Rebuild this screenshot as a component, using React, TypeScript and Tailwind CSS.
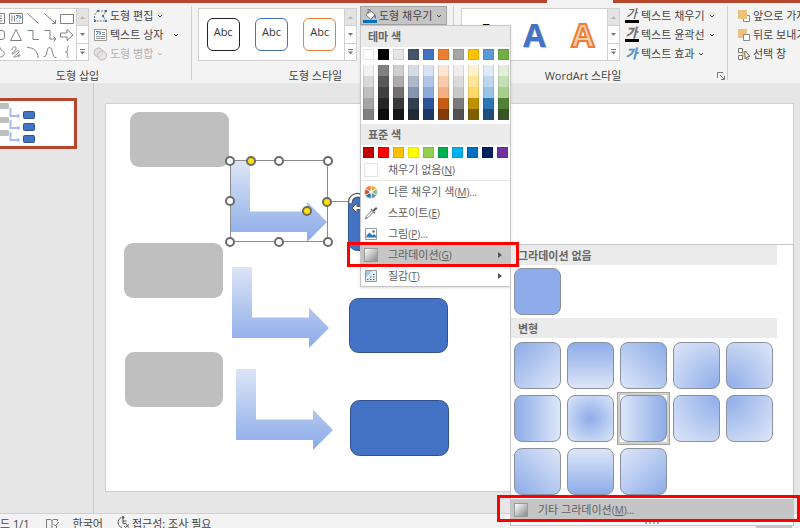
import type { ReactNode } from "react";
import clsx from "clsx";

const themeColors = [
  { base: "#ffffff", shades: ["#f2f2f2", "#d9d9d9", "#bfbfbf", "#a6a6a6", "#808080"] },
  { base: "#000000", shades: ["#808080", "#595959", "#404040", "#262626", "#0d0d0d"] },
  { base: "#e7e6e6", shades: ["#d0cece", "#aeabab", "#757070", "#3a3838", "#171616"] },
  { base: "#44546a", shades: ["#d6dce4", "#adb9ca", "#8496b0", "#323f4f", "#222a35"] },
  { base: "#4472c4", shades: ["#d9e2f3", "#b4c6e7", "#8eaadb", "#2f5496", "#1f3864"] },
  { base: "#ed7d31", shades: ["#fbe5d5", "#f7cbac", "#f4b183", "#c55a11", "#833c0b"] },
  { base: "#a5a5a5", shades: ["#ededed", "#dbdbdb", "#c9c9c9", "#7b7b7b", "#525252"] },
  { base: "#ffc000", shades: ["#fff2cc", "#fee599", "#ffd965", "#bf9000", "#7f6000"] },
  { base: "#5b9bd5", shades: ["#deebf6", "#bdd7ee", "#9cc3e5", "#2e75b5", "#1e4e79"] },
  { base: "#70ad47", shades: ["#e2efd9", "#c5e0b3", "#a8d08d", "#538135", "#375623"] },
];

const standardColors = [
  "#c00000",
  "#ff0000",
  "#ffc000",
  "#ffff00",
  "#92d050",
  "#00b050",
  "#00b0f0",
  "#0070c0",
  "#002060",
  "#7030a0",
];

const variations = [
  { name: "왼쪽 위에서", fill: "bg-[linear-gradient(135deg,#8dace9,#dde6f7)]" },
  { name: "위에서", fill: "bg-[linear-gradient(180deg,#8dace9,#dde6f7)]" },
  { name: "오른쪽 위에서", fill: "bg-[linear-gradient(225deg,#8dace9,#dde6f7)]" },
  { name: "오른쪽 아래 모서리", fill: "bg-[radial-gradient(circle_at_100%_100%,#8dace9,#dde6f7)]" },
  { name: "왼쪽 아래 모서리", fill: "bg-[radial-gradient(circle_at_0%_100%,#8dace9,#dde6f7)]" },
  { name: "왼쪽에서", fill: "bg-[linear-gradient(90deg,#8dace9,#dde6f7)]" },
  { name: "가운데에서", fill: "bg-[radial-gradient(circle,#8dace9,#dde6f7)]" },
  { name: "오른쪽에서", fill: "bg-[linear-gradient(270deg,#8dace9,#dde6f7)]", selected: true },
  { name: "오른쪽 위 모서리", fill: "bg-[radial-gradient(circle_at_100%_0%,#8dace9,#dde6f7)]" },
  { name: "왼쪽 위 모서리", fill: "bg-[radial-gradient(circle_at_0%_0%,#8dace9,#dde6f7)]" },
  { name: "왼쪽 아래에서", fill: "bg-[linear-gradient(45deg,#8dace9,#dde6f7)]" },
  { name: "아래에서", fill: "bg-[linear-gradient(0deg,#8dace9,#dde6f7)]" },
  { name: "오른쪽 아래에서", fill: "bg-[linear-gradient(315deg,#8dace9,#dde6f7)]" },
];

const shapes: { name: string; art: ReactNode }[] = [
  { name: "텍스트 상자", art: <path d="M2.5 3.5h11v10h-11zM5 6h6M5 8.500h6M5 11h6" /> },
  {
    name: "세로 텍스트",
    art: (
      <>
        <path d="M1.500 3.500h13v10h-13zM4 5.500v6M6.500 5.500v6M9 10.500v1M11.500 10.500v1" />
        <path d="M8 5.500h2.500l-2 3.500M12 5v4M12 7h1.500" stroke="#2e75b5" />
      </>
    ),
  },
  { name: "선", art: <path d="M2.500 3.500l11 10" /> },
  { name: "화살표", art: <path d="M2.500 3.500l11 10M13.500 10v3.500h-3.500" /> },
  { name: "직사각형", art: <path d="M1.500 4.500h13v9h-13z" /> },
  { name: "둥근 직사각형", art: <rect x="2.500" y="3.500" width="11" height="9" rx="2.500" /> },
  { name: "삼각형", art: <path d="M8 2.500l5.500 11h-11z" /> },
  { name: "꺾인 연결선", art: <path d="M2.500 3.500h5.500v9h6" /> },
  { name: "꺾인 화살표", art: <path d="M2.500 3.500h5.500v8.500h6M11.500 9.500l2.500 2.500-2.500 2.500" /> },
  { name: "오른쪽 화살표", art: <path d="M1.500 6h6.500v-3.500l6 5.500-6 5.500v-3.500h-6.500z" /> },
  { name: "자유형", art: <path d="M6 3.500c5-2 3 3 5 3s4 4 0 6-6 0-8-1" /> },
  {
    name: "자유 곡선",
    art: <path d="M4 6c0-4 5-4 4-1s-5 4-4 5 6-5 7-3-6 5-5 6 6-3 6-2-1 2-2 2" />,
  },
  { name: "호", art: <path d="M2 3.500c7 0 11 4 11 10.500" /> },
  { name: "곡선", art: <path d="M1.500 12.500c5 1 2-9 6-9s2 11 7 10" /> },
  { name: "왼쪽 중괄호", art: <path d="M10 2.500c-2.500 0-1.500 2-1.500 3.500s-.5 2-2 2c1.500 0 2 .5 2 2s-1 3.500 1.500 3.500" /> },
];

function Chevron() {
  return (
    <svg viewBox="0 0 6 4" className="h-1 w-1.5 shrink-0" fill="none" stroke="currentColor">
      <path d="M1 1l2 2 2-2" />
    </svg>
  );
}

function Divider() {
  return <div className="my-[3px] w-px shrink-0 bg-[#cfcfcf]" />;
}

function GalleryScroller() {
  return (
    <div className="flex w-3 shrink-0 flex-col divide-y divide-[#d0d0d0] border-l border-[#d0d0d0] text-[#777]">
      <button aria-label="위로" className="flex flex-1 items-center justify-center bg-[#e3e3e3] text-[#b8b8b8]">
        <svg viewBox="0 0 5 3" className="h-[3px] w-[5px]" fill="currentColor">
          <path d="M0 3l2.500-3L5 3z" />
        </svg>
      </button>
      <button aria-label="아래로" className="flex flex-1 items-center justify-center">
        <svg viewBox="0 0 5 3" className="h-[3px] w-[5px]" fill="currentColor">
          <path d="M0 0l2.500 3L5 0z" />
        </svg>
      </button>
      <button aria-label="자세히" className="flex flex-1 items-center justify-center">
        <svg viewBox="0 0 5 6" className="h-1.5 w-[5px]" fill="currentColor">
          <path d="M0 0h5v1H0zM0 2.500l2.500 3L5 2.500z" />
        </svg>
      </button>
    </div>
  );
}

function RibbonButton({
  icon,
  label,
  wide,
  plain,
  disabled,
}: {
  icon: ReactNode;
  label: string;
  wide?: boolean;
  plain?: boolean;
  disabled?: boolean;
}) {
  return (
    <button
      disabled={disabled}
      className={clsx(
        "flex h-[19px] items-center whitespace-nowrap",
        wide ? "gap-2.5" : "gap-1",
        disabled && "text-[#b1b1b1]"
      )}
    >
      <span className="flex items-center gap-0.5">
        {icon}
        <span className="pt-0.5">{label}</span>
      </span>
      {!plain && <Chevron />}
    </button>
  );
}

function Group({
  title,
  launcher,
  className,
  children,
}: {
  title?: string;
  launcher?: boolean;
  className: string;
  children: ReactNode;
}) {
  return (
    <section className={clsx("flex flex-col pt-[3px]", className)}>
      <div className="flex h-[63px]">{children}</div>
      {title && (
        <div className="flex h-3.5 items-center leading-[14px]">
          <h2 className="flex-1 text-center">{title}</h2>
          {launcher && (
            <button aria-label="서식 창 열기" className="mr-0.5">
              <svg viewBox="0 0 8 8" className="h-2 w-2" fill="none" stroke="#777">
                <path d="M.5 6V.5H6M3 3l4 4M7.500 4v3.500H4" />
              </svg>
            </button>
          )}
        </div>
      )}
    </section>
  );
}

function TextIcon({ kind }: { kind: "fill" | "outline" | "effect" }) {
  return (
    <span aria-hidden className="flex h-4 w-[15px] shrink-0 flex-col items-center justify-center gap-px">
      <span
        className={clsx(
          "text-[12px] leading-[11px] italic",
          kind === "outline" && "text-white [-webkit-text-stroke:1px_#777]",
          kind === "effect" && "text-[#a9cbea] [-webkit-text-stroke:1px_#5a93c8]"
        )}
      >
        가
      </span>
      {kind !== "effect" && <span className="h-[3px] w-3.5 bg-black" />}
    </span>
  );
}

function Swatch({ color }: { color: string }) {
  return (
    <button
      aria-label={color}
      className="h-[11px] w-[11px] border border-black/10"
      style={{ backgroundColor: color }}
    />
  );
}

function MenuHeading({ children, className }: { children: ReactNode; className?: string }) {
  return (
    <h3 className={clsx("flex items-center bg-[#ebebeb] pt-0.5 pl-[7px] font-bold text-[#666]", className)}>
      {children}
    </h3>
  );
}

function MenuItem({
  icon,
  label,
  hotkey,
  more,
  arrow,
  active,
}: {
  icon: ReactNode;
  label: string;
  hotkey: string;
  more?: boolean;
  arrow?: boolean;
  active?: boolean;
}) {
  return (
    <button
      className={clsx(
        "flex h-[21px] w-full items-center gap-2.5 pl-[3px] text-left whitespace-nowrap",
        active && "bg-[#c5c5c5]"
      )}
    >
      <span className="flex h-3.5 w-3.5 shrink-0">{icon}</span>
      <span className="flex-1 pt-0.5">
        {label}
        <span className="text-[10px]">
          (<u>{hotkey}</u>){more && "..."}
        </span>
      </span>
      {arrow && (
        <svg viewBox="0 0 4 6" className="mr-2 h-1.5 w-1" fill="#555">
          <path d="M0 0l4 3-4 3z" />
        </svg>
      )}
    </button>
  );
}

function GradientIcon() {
  return <span className="h-full w-full border border-[#999] bg-linear-to-br from-white to-[#8a8a8a]" />;
}

function GradientThumb({ name, fill, selected }: { name: string; fill: string; selected?: boolean }) {
  return (
    <button
      aria-label={name}
      className={clsx(
        "h-[47px] w-[47px]",
        selected && "ring-2 ring-[#d2d0cc] outline outline-offset-2 outline-[#a5a39f]"
      )}
    >
      <span className={clsx("block h-full w-full rounded-lg border border-[#8a909e]", fill)} />
    </button>
  );
}

function GradientMenu() {
  return (
    <div className="absolute top-0 left-full z-10 w-[284px] border border-[#c6c6c6] bg-white">
      <MenuHeading className="mr-4 h-5">그라데이션 없음</MenuHeading>
      <div className="flex p-[3px]">
        <GradientThumb name="그라데이션 없음" fill="bg-[#8dace9]" />
      </div>
      <MenuHeading className="mr-4 h-5">변형</MenuHeading>
      <div className="flex flex-wrap gap-1.5 py-1 pr-3 pl-[3px]">
        {variations.map((v) => (
          <GradientThumb key={v.name} {...v} />
        ))}
      </div>
      <div className="relative">
        <MenuItem icon={<GradientIcon />} label="기타 그라데이션" hotkey="M" more active />
        <div className="pointer-events-none absolute -top-1 -right-[7px] -bottom-0.5 -left-3.5 border-3 border-[#ff0000]" />
      </div>
      <div className="flex h-[5px] items-center justify-center gap-0.5">
        {[0, 1, 2, 3].map((dot) => (
          <span key={dot} className="h-0.5 w-0.5 bg-[#aaa]" />
        ))}
      </div>
    </div>
  );
}

function FillMenu() {
  return (
    <div className="absolute top-full left-0 w-[151px] border border-[#c6c6c6] bg-white text-[#606060] shadow-sm">
      <MenuHeading className="h-[21px]">테마 색</MenuHeading>
      <div className="flex gap-1 px-0.5 pt-0.5 pb-1">
        {themeColors.map((c) => (
          <div key={c.base} className="flex flex-col gap-[5px]">
            <Swatch color={c.base} />
            <div className="flex flex-col">
              {c.shades.map((shade) => (
                <button
                  key={shade}
                  aria-label={shade}
                  className="h-[11px] w-[11px] border-x border-black/10"
                  style={{ backgroundColor: shade }}
                />
              ))}
            </div>
          </div>
        ))}
      </div>
      <MenuHeading className="h-[21px]">표준 색</MenuHeading>
      <div className="flex gap-1 px-0.5 pt-0.5 pb-px">
        {standardColors.map((c) => (
          <Swatch key={c} color={c} />
        ))}
      </div>
      <div className="border-b border-[#e3e3e3]">
        <MenuItem
          icon={<span className="h-full w-full border border-[#e3e3e3] bg-white" />}
          label="채우기 없음"
          hotkey="N"
        />
      </div>
      <MenuItem
        icon={
          <svg viewBox="0 0 14 14" className="h-3.5 w-3.5" stroke="#fff" strokeWidth=".6">
            <path d="M7 7V.5a6.500 6.500 0 0 1 5.600 3.300z" fill="#f0b429" />
            <path d="M7 7l5.600-3.200a6.500 6.500 0 0 1 0 6.500z" fill="#8fb8a0" />
            <path d="M7 7l5.600 3.300A6.500 6.500 0 0 1 7 13.500z" fill="#6a9b8c" />
            <path d="M7 7v6.500a6.500 6.500 0 0 1-5.600-3.300z" fill="#2e75b5" />
            <path d="M7 7l-5.600 3.200a6.500 6.500 0 0 1 0-6.500z" fill="#c9512e" />
            <path d="M7 7L1.400 3.700A6.500 6.500 0 0 1 7 .5z" fill="#e8824a" />
            <circle cx="7" cy="7" r="1.500" fill="#fff" />
          </svg>
        }
        label="다른 채우기 색"
        hotkey="M"
        more
      />
      <MenuItem
        icon={
          <svg viewBox="0 0 14 14" className="h-3.5 w-3.5" fill="none" stroke="#777">
            <path d="M8 4.500L2.500 10 1 13l3-1.500L9.500 6" fill="#fff" />
            <path d="M7 3l4 4M9 5l2.500-2.500" strokeWidth="1.500" />
            <path d="M9.500 4.500l2.500-3 1 1-3 2.500z" fill="#555" stroke="#555" />
          </svg>
        }
        label="스포이트"
        hotkey="E"
      />
      <MenuItem
        icon={
          <svg viewBox="0 0 14 14" className="h-3.5 w-3.5">
            <path d="M1.500 1.500h11v11h-11z" fill="#fff" stroke="#999" />
            <path d="M2.500 10.500V8.500l3-3 3 3 1.500-1.500 2 2v1.500z" fill="#2e75b5" />
            <circle cx="9.500" cy="4.500" r="1.200" fill="#2e75b5" />
          </svg>
        }
        label="그림"
        hotkey="P"
        more
      />
      <div className="relative">
        <MenuItem icon={<GradientIcon />} label="그라데이션" hotkey="G" arrow active />
        <GradientMenu />
        <div className="pointer-events-none absolute -top-0.5 -right-[9px] -bottom-0.5 -left-3.5 z-20 border-3 border-[#ff0000]" />
      </div>
      <MenuItem
        icon={
          <svg viewBox="0 0 14 14" className="h-3.5 w-3.5">
            <path d="M1.500 1.500h11v11h-11z" fill="#e4edf6" stroke="#999" />
            <path d="M2 2h6L2 8z" fill="#a9c6e4" />
            <path d="M3 10.500h1.500M6 10.500h1.500M9 10.500h1.500M6 8h1.500M9 8h1.500M9 5.500h1.500" stroke="#2e75b5" />
          </svg>
        }
        label="질감"
        hotkey="T"
        arrow
      />
    </div>
  );
}

function Ribbon() {
  return (
    <header className="relative z-10 flex h-20 shrink-0 bg-[#f3f3f3]">
      <Group title="도형 삽입" className="w-[191px] shrink-0 [&_h2]:pr-9">
        <div className="mt-0.5 flex h-[53px] w-[89px] border border-l-0 border-[#d0d0d0] bg-white">
          <div className="grid flex-1 grid-cols-[repeat(5,17px)] justify-end overflow-hidden">
            {shapes.map((s) => (
              <button key={s.name} aria-label={s.name} className="flex h-[17px] items-center">
                <svg viewBox="0 0 16 16" className="h-4 w-4" fill="none" stroke="#808080">
                  {s.art}
                </svg>
              </button>
            ))}
          </div>
          <GalleryScroller />
        </div>
        <div className="flex flex-col items-start pl-1">
          <RibbonButton
            icon={
              <svg viewBox="0 0 15 14" className="h-3.5 w-[15px]" fill="none" stroke="#777">
                <path d="M1.500 12V6l3-4M5 2h8l-3 5 3 5H2" strokeDasharray="2 1" />
                <path d="M4 1h2v2H4zM12 1h2v2h-2zM9 6h2v2H9zM12 11h2v2h-2zM1 11h2v2H1z" fill="#2e75b5" stroke="none" />
              </svg>
            }
            label="도형 편집"
          />
          <RibbonButton
            wide
            icon={
              <svg viewBox="0 0 15 14" className="h-3.5 w-[15px]" fill="none" stroke="#999">
                <path d="M1.500 1.500h12v11h-12z" fill="#fff" />
                <path d="M9 4.500h3M9 6.500h3M3 8.500h9M3 10.500h9" />
                <path d="M3 3.500h2.500L3.500 7M7 3v4M7 5h1" stroke="#2e75b5" />
              </svg>
            }
            label="텍스트 상자"
          />
          <RibbonButton
            disabled
            icon={
              <svg viewBox="0 0 15 14" className="h-3.5 w-[15px]" fill="#e6e0e6" stroke="#bbb">
                <circle cx="5.500" cy="5.500" r="4.500" />
                <circle cx="9" cy="8.500" r="4.500" fillOpacity=".7" />
              </svg>
            }
            label="도형 병합"
          />
        </div>
      </Group>
      <Divider />
      <Group title="도형 스타일" className="w-[261px] shrink-0 pl-1.5 [&_h2]:pr-5">
        <div className="mt-0.5 flex h-[53px] w-[159px] border border-[#d0d0d0] bg-white">
          <div className="flex flex-1 items-center justify-around">
            {["border-[#222]", "border-[#4472c4]", "border-[#ed7d31]"].map((border) => (
              <button
                key={border}
                className={clsx("h-[33px] w-[33px] rounded-md border bg-white pb-1 text-[#333]", border)}
              >
                Abc
              </button>
            ))}
          </div>
          <GalleryScroller />
        </div>
        <div className="relative ml-[3px] h-[19px]">
          <button className="flex h-[19px] w-[87px] items-center gap-1 border border-[#a3a3a3] bg-[#c5c5c5] pl-0.5 whitespace-nowrap">
            <svg viewBox="0 0 14 16" className="h-4 w-3.5 shrink-0" fill="none">
              <path d="M3 7l4-4.500 5 4-4 5z" fill="#fff" stroke="#777" />
              <path d="M5 6V1.500h2V5" stroke="#777" />
              <path d="M11.500 6c2 1.500 1.500 3 1 5-1-1-1.500-3-1-5z" fill="#2e75b5" />
              <path d="M0 12h14v3H0z" fill="#0070c0" />
            </svg>
            <span className="-ml-0.5 pt-0.5">도형 채우기</span>
            <Chevron />
          </button>
          <FillMenu />
        </div>
      </Group>
      <Divider />
      <Group title="WordArt 스타일" launcher className="w-[273px] shrink-0 pl-[7px] [&_h2]:pr-3">
        <div className="mt-0.5 flex h-[53px] w-[159px] border border-[#d0d0d0] bg-white text-[33px] leading-none font-bold">
          <div className="grid flex-1 grid-cols-3 items-center">
            <button className="text-black">A</button>
            <button className="text-[#4472c4] [text-shadow:1px_1px_1px_#bbb]">A</button>
            <button className="text-[#f8cbad] [-webkit-text-stroke:2px_#ed7d31]">A</button>
          </div>
          <GalleryScroller />
        </div>
        <div className="flex flex-col items-start pl-1">
          <RibbonButton icon={<TextIcon kind="fill" />} label="텍스트 채우기" />
          <RibbonButton icon={<TextIcon kind="outline" />} label="텍스트 윤곽선" />
          <RibbonButton icon={<TextIcon kind="effect" />} label="텍스트 효과" />
        </div>
      </Group>
      <Divider />
      <Group className="min-w-0 flex-1 overflow-hidden pl-[9px]">
        <div className="flex flex-col items-start">
          <RibbonButton
            plain
            icon={
              <svg viewBox="0 0 14 14" className="h-3.5 w-3.5 shrink-0">
                <path d="M6.500 6.500h6v6h-6z" fill="#fff" stroke="#888" />
                <path d="M1 1h9v9H1z" fill="#ecc27e" />
              </svg>
            }
            label="앞으로 가져오기"
          />
          <RibbonButton
            plain
            icon={
              <svg viewBox="0 0 14 14" className="h-3.5 w-3.5 shrink-0">
                <path d="M1 1h9v9H1z" fill="#ecc27e" />
                <path d="M6.500 6.500h6v6h-6z" fill="#fff" stroke="#888" />
              </svg>
            }
            label="뒤로 보내기"
          />
          <RibbonButton
            plain
            icon={
              <svg viewBox="0 0 14 14" className="h-3.5 w-3.5 shrink-0" fill="#fff" stroke="#777">
                <path d="M5 4h5v6H5z" fill="#ecc27e" stroke="none" />
                <path d="M1.500 1.500h4v4h-4zM1.500 8.500h4v4h-4z" />
                <path d="M8 4l5 5.500-2.500.2 1 2.500-1.300.6-1-2.500L8 12z" />
              </svg>
            }
            label="선택 창"
          />
        </div>
      </Group>
    </header>
  );
}

function SlideThumbnail() {
  return (
    <button aria-label="슬라이드 1" className="mt-[15px] block w-[77px] border-[3px] border-l-0 border-[#b7472a] bg-white">
      <svg viewBox="0 0 74 45" className="block w-full">
        <g fill="#bfbfbf">
          <rect x="-3" y="2" width="12" height="6" rx="1" />
          <rect x="-3" y="16" width="12" height="6" rx="1" />
          <rect x="-3" y="29" width="12" height="6" rx="1" />
        </g>
        <g fill="#a3bdf0">
          <path d="M9.500 7h2v7h6v-1.500l3 2.500-3 2.500V16h-8z" />
          <path d="M9.500 19h2v7h6v-1.500l3 2.500-3 2.500V28h-8z" />
          <path d="M9.500 31h2v7h6v-1.500l3 2.500-3 2.500V40h-8z" />
        </g>
        <g fill="#4472c4" stroke="#2f528f">
          <rect x="23.500" y="10.500" width="11" height="7" rx="1" />
          <rect x="23.500" y="22.500" width="11" height="7" rx="1" />
          <rect x="23.500" y="34.500" width="11" height="7" rx="1" />
        </g>
      </svg>
    </button>
  );
}

// bent arrow, origin at the top left of its box
const arrowPath = "M0 0h20v50.500h57v-10l20 20.500-20 20v-10H0z";

function Slide() {
  return (
    <svg viewBox="106 104 687 387" className="block w-full bg-white outline outline-[#d0d0d0]">
      <defs>
        <linearGradient id="arrowFill" x1="0" y1="0" x2="0" y2="1">
          <stop offset="0" stopColor="#dce5f6" />
          <stop offset="1" stopColor="#8aaae8" />
        </linearGradient>
      </defs>
      <g fill="#bfbfbf">
        <rect x="130" y="112" width="99" height="55" rx="9" />
        <rect x="124" y="243" width="99" height="55" rx="9" />
        <rect x="125" y="352" width="98" height="55" rx="9" />
      </g>
      <g fill="url(#arrowFill)">
        <path d={arrowPath} transform="translate(230 161)" />
        <path d={arrowPath} transform="translate(232 267)" />
        <path d={arrowPath} transform="translate(236 369)" />
      </g>
      <g fill="#4472c4" stroke="#2f528f">
        <rect x="348.500" y="195.500" width="98" height="55" rx="9" />
        <rect x="349.500" y="298.500" width="98" height="54" rx="9" />
        <rect x="350.500" y="400.500" width="98" height="55" rx="9" />
      </g>
      <path d="M230.500 160.500h97v81h-97zM327.500 201.500h24" fill="none" stroke="#8c8c8c" />
      <g fill="#fff" stroke="#6a6a6a" strokeWidth="2">
        <circle cx="230" cy="161" r="4" />
        <circle cx="279" cy="161" r="4" />
        <circle cx="328" cy="161" r="4" />
        <circle cx="230" cy="201" r="4" />
        <circle cx="230" cy="242" r="4" />
        <circle cx="279" cy="242" r="4" />
        <circle cx="328" cy="242" r="4" />
      </g>
      <g fill="#ffe100" stroke="#6a6a6a" strokeWidth="2">
        <circle cx="251" cy="161" r="4" />
        <circle cx="327" cy="202" r="4" />
        <circle cx="307" cy="211" r="4" />
      </g>
      <g fill="none" strokeLinejoin="round">
        <path d="M350.500 203a7 7 0 0 1 12-5.500" stroke="#555" strokeWidth="5" />
        <path d="M350.500 203a7 7 0 0 1 12-5.500" stroke="#fff" strokeWidth="2.500" />
        <path d="M352 208l5-5v3.500h5v3h-5v3.500z" fill="#fff" stroke="#555" />
      </g>
    </svg>
  );
}

function StatusBar() {
  return (
    <footer className="flex h-[15px] shrink-0 items-start overflow-hidden border-t border-[#d0d0d0] bg-[#f3f3f3] pt-0.5 leading-4">
      <span>드 1/1</span>
      <button aria-label="맞춤법 검사" className="ml-4 h-4">
        <svg viewBox="0 0 13 13" className="h-[13px] w-[13px]" fill="none" stroke="#777">
          <path d="M6 2.500L4.500 1.500h-4v9h4l1.500 1 1.500-1h3V8M6 2.500v9M6 2.500l1.500-1h4V3M7.500 6l2 2 3-4" />
        </svg>
      </button>
      <button className="ml-3.5">한국어</button>
      <button className="ml-3.5 flex items-start gap-0.5">
        <svg viewBox="0 0 13 13" className="h-[13px] w-[13px]" fill="none" stroke="#555">
          <path d="M4 1.500C0 4 0 10 5 11.500M6 3v4.500h3l2.500 4M6 5h3.500" />
          <circle cx="6" cy="1.500" r="1" fill="#555" />
          <path d="M7 10l1.500 1.500 3.500-3" />
        </svg>
        접근성: 조사 필요
      </button>
      <button aria-label="기본 보기" className="mr-2 ml-auto h-4 w-9 bg-[#c5c5c5]" />
    </footer>
  );
}

export default function App() {
  return (
    <div className="flex h-screen flex-col overflow-hidden bg-[#e6e6e6] font-['Open_Sans','Noto_Sans_CJK_KR',sans-serif] text-[11px] text-[#444]">
      <div className="flex h-[3px] shrink-0 bg-[#b7472a]">
        <div className="ml-[547px] w-[66px] bg-[#f3f3f3]" />
      </div>
      <Ribbon />
      <div className="flex min-h-0 flex-1">
        <aside className="w-[94px] shrink-0 border-r border-[#cacaca]">
          <SlideThumbnail />
        </aside>
        <main className="min-w-0 flex-1 pt-[21px] pr-[7px] pl-3">
          <Slide />
        </main>
      </div>
      <StatusBar />
    </div>
  );
}
